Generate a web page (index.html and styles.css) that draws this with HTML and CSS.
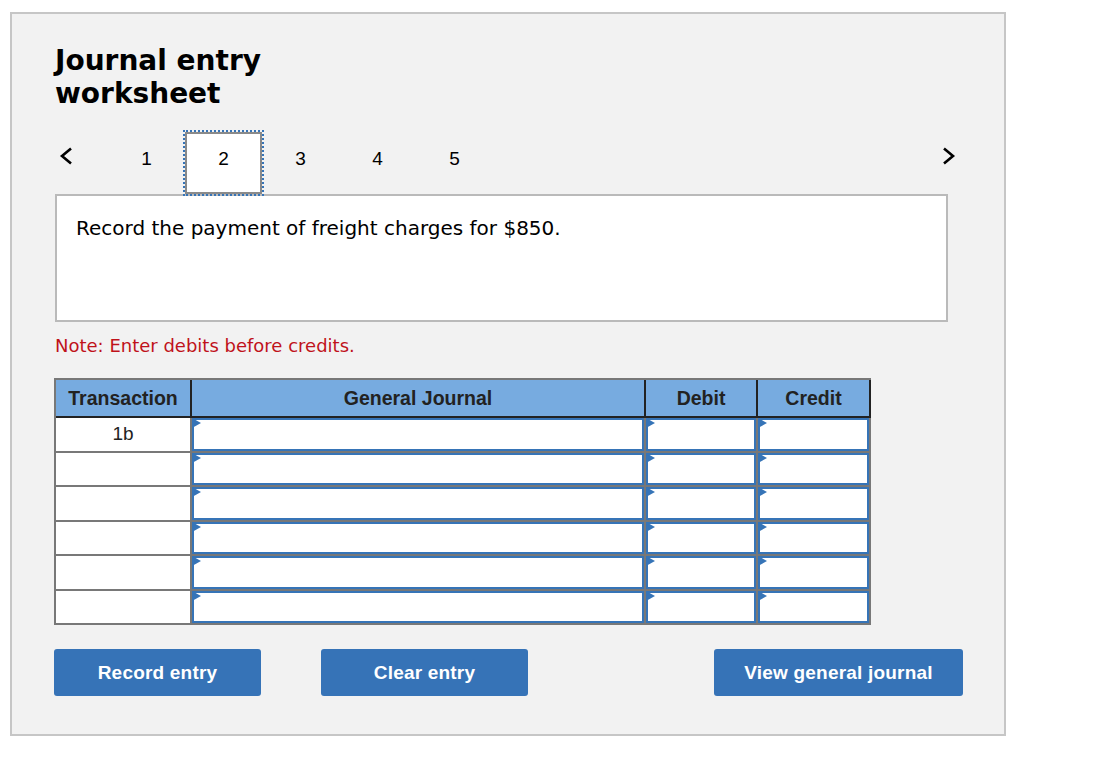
FILE: index.html
```html
<!DOCTYPE html>
<html lang="en">
<head>
    <meta charset="UTF-8">
    <meta name="viewport" content="width=device-width, initial-scale=1.0">
    <title>Journal entry worksheet</title>
    <link rel="stylesheet" href="styles.css">
</head>
<body>
    <div class="panel">
        <h1 class="title">Journal entry worksheet</h1>

        <div class="steps">
            <div class="arrow prev" title="Previous">
                <svg width="14" height="18" viewBox="0 0 14 18"><polyline points="12,1.5 3,9 12,16.5" fill="none" stroke="#000" stroke-width="2.6"/></svg>
            </div>
            <div class="step">1</div>
            <div class="step active">2</div>
            <div class="step">3</div>
            <div class="step">4</div>
            <div class="step">5</div>
            <div class="arrow next" title="Next">
                <svg width="14" height="18" viewBox="0 0 14 18"><polyline points="2,1.5 11,9 2,16.5" fill="none" stroke="#000" stroke-width="2.6"/></svg>
            </div>
        </div>

        <div class="question">Record the payment of freight charges for $850.</div>

        <p class="note">Note: Enter debits before credits.</p>

        <table class="journal">
            <thead>
                <tr>
                    <th class="col-tr">Transaction</th>
                    <th class="col-gj">General Journal</th>
                    <th class="col-dr">Debit</th>
                    <th class="col-cr">Credit</th>
                </tr>
            </thead>
            <tbody>
                <tr>
                    <td class="tr">1b</td>
                    <td class="field"><span class="tri"></span></td>
                    <td class="field"><span class="tri"></span></td>
                    <td class="field"><span class="tri"></span></td>
                </tr>
                <tr>
                    <td class="tr"></td>
                    <td class="field"><span class="tri"></span></td>
                    <td class="field"><span class="tri"></span></td>
                    <td class="field"><span class="tri"></span></td>
                </tr>
                <tr>
                    <td class="tr"></td>
                    <td class="field"><span class="tri"></span></td>
                    <td class="field"><span class="tri"></span></td>
                    <td class="field"><span class="tri"></span></td>
                </tr>
                <tr>
                    <td class="tr"></td>
                    <td class="field"><span class="tri"></span></td>
                    <td class="field"><span class="tri"></span></td>
                    <td class="field"><span class="tri"></span></td>
                </tr>
                <tr>
                    <td class="tr"></td>
                    <td class="field"><span class="tri"></span></td>
                    <td class="field"><span class="tri"></span></td>
                    <td class="field"><span class="tri"></span></td>
                </tr>
                <tr>
                    <td class="tr"></td>
                    <td class="field"><span class="tri"></span></td>
                    <td class="field"><span class="tri"></span></td>
                    <td class="field"><span class="tri"></span></td>
                </tr>
            </tbody>
        </table>

        <div class="actions">
            <button class="btn">Record entry</button>
            <button class="btn clear">Clear entry</button>
            <button class="btn view">View general journal</button>
        </div>
    </div>
</body>
</html>
```

FILE: styles.css
```css
body {
    margin: 0;
    background: #fff;
    font-family: "DejaVu Sans", Verdana, sans-serif;
    color: #000;
}
.panel {
    width: 949px;
    margin: 12px 0 0 10px;
    padding: 30px 0 38px 43px;
    border: 2px solid #c6c6c6;
    background-color: #f2f2f2;
}
.title {
    max-width: 260px;
    margin: 0;
    font-size: 28px;
    line-height: 33px;
    font-weight: bold;
}
.steps {
    display: flex;
    align-items: flex-start;
    width: 901px;
    height: 62px;
    margin-top: 22px;
    font-family: "Liberation Sans", Arial, sans-serif;
}
.arrow {
    height: 62px;
    box-sizing: border-box;
    padding-top: 15px;
    cursor: pointer;
}
.prev {
    width: 53px;
    padding-left: 4px;
}
.next {
    margin-left: auto;
}
.step {
    box-sizing: border-box;
    width: 77px;
    height: 62px;
    padding-top: 13px;
    border: 2px solid transparent;
    font-size: 19px;
    line-height: 23px;
    text-align: center;
    cursor: pointer;
}
.step.active {
    background: #fff;
    border-color: #8a8a8a;
    outline: 2px dotted #3674b7;
    position: relative;
    z-index: 1;
}
.question {
    box-sizing: border-box;
    width: 893px;
    height: 128px;
    padding: 20px 19px;
    border: 2px solid #bababa;
    background: #fff;
    font-size: 20px;
    line-height: 24px;
}
.note {
    margin: 13px 0 0;
    color: #c0121b;
    font-size: 18px;
    line-height: 22px;
}
.journal {
    margin: 21px 0 0 -1px;
    border-collapse: separate;
    border-spacing: 0;
    table-layout: fixed;
    border-top: 2px solid #787878;
    border-left: 2px solid #787878;
    font-family: "Liberation Sans", Arial, sans-serif;
    color: #222;
}
.journal th {
    height: 36px;
    padding: 0;
    background: #77abe0;
    border-right: 2px solid #222;
    border-bottom: 2px solid #222;
    font-size: 19.5px;
    font-weight: bold;
    text-align: center;
}
.col-tr { width: 134px; }
.col-gj { width: 452px; }
.col-dr { width: 110px; }
.col-cr { width: 111px; }
.journal td {
    height: 32.5px;
    padding: 0;
    background: #fff;
    border-right: 2px solid #787878;
    border-bottom: 2px solid #787878;
    font-size: 19px;
    text-align: center;
}
.journal td.field {
    position: relative;
    box-shadow: inset 0 0 0 2px #3674b7;
}
.tri {
    position: absolute;
    top: 0;
    left: 0;
    width: 0;
    height: 0;
    border-top: 5.5px solid transparent;
    border-bottom: 5.5px solid transparent;
    border-left: 9px solid #3674b7;
}
.actions {
    display: flex;
    width: 909px;
    margin: 24px 0 0 -1px;
}
.btn {
    height: 47px;
    width: 207px;
    border: none;
    border-radius: 3px;
    background-color: #3673b7;
    color: #fff;
    font-family: "Liberation Sans", Arial, sans-serif;
    font-size: 19px;
    font-weight: bold;
    letter-spacing: 0.2px;
    cursor: pointer;
}
.btn.clear {
    margin-left: 60px;
}
.btn.view {
    width: 249px;
    margin-left: auto;
}
```
